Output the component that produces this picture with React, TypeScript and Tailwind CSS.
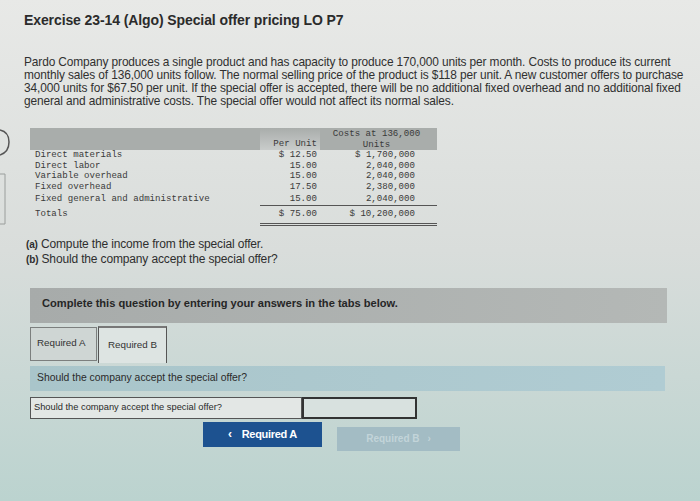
import React from 'react';

const rows = [
  { label: 'Direct materials', unit: '$ 12.50', total: '$ 1,700,000' },
  { label: 'Direct labor', unit: '15.00', total: '2,040,000' },
  { label: 'Variable overhead', unit: '15.00', total: '2,040,000' },
  { label: 'Fixed overhead', unit: '17.50', total: '2,380,000' },
];

const paragraph = [
  'Pardo Company produces a single product and has capacity to produce 170,000 units per month. Costs to produce its current',
  'monthly sales of 136,000 units follow. The normal selling price of the product is $118 per unit. A new customer offers to purchase',
  '34,000 units for $67.50 per unit. If the special offer is accepted, there will be no additional fixed overhead and no additional fixed',
  'general and administrative costs. The special offer would not affect its normal sales.',
];

const App = () => {
  return (
    <div
      className="relative w-[700px] h-[501px] overflow-hidden bg-gradient-to-b from-[#e8e9e7] via-[#d9dddb] to-[#bbd3cf] text-[#262626] pl-[24px]"
      style={{ fontFamily: '"Liberation Sans", Arial, sans-serif' }}
    >
      {/* left edge bits of the window behind */}
      <svg className="absolute left-0 top-[128px]" width="12" height="100" viewBox="0 0 12 100">
        <path d="M0 2 Q9 4 9 14 Q9 24 0 27" fill="none" stroke="#555" strokeWidth="1.5" />
        <path d="M0 46 H5 V96 H0" fill="none" stroke="#9a9e9c" strokeWidth="1" />
      </svg>

      <h1 className="pt-[12px] text-[14px] leading-[16px] font-bold tracking-[-0.1px] text-[#2b2b2b]">
        Exercise 23-14 (Algo) Special offer pricing LO P7
      </h1>

      <div className="mt-[28px] text-[11.9px] leading-[13px] tracking-[-0.12px] text-[#303030] whitespace-nowrap">
        {paragraph.map((line) => (
          <div key={line}>{line}</div>
        ))}
      </div>

      {/* cost table */}
      <div
        className="ml-[6px] mt-[20px] w-[407px] text-[9.1px] text-[#3a3a3a]"
        style={{ fontFamily: '"Liberation Mono", "DejaVu Sans Mono", monospace' }}
      >
        <div className="grid grid-cols-[230px_60px_117px] h-[22px] bg-[#a9adab] leading-[10.5px]">
          <div />
          <div className="flex items-end justify-end pr-[3px] pb-[1px] bg-gradient-to-b from-[#a9adab] to-[#c9cccb]">Per Unit</div>
          <div className="text-center pr-[4px] pt-[1px]">
            <div>Costs at 136,000</div>
            <div>Units</div>
          </div>
        </div>
        {rows.map((r) => (
          <div key={r.label} className="grid grid-cols-[230px_60px_117px] leading-[10.5px]">
            <div className="pl-[5px]">{r.label}</div>
            <div className="text-right pr-[3px]">{r.unit}</div>
            <div className="text-right pr-[22px]">{r.total}</div>
          </div>
        ))}
        <div className="grid grid-cols-[230px_60px_117px] leading-[10.5px] pt-[1.5px]">
          <div className="pl-[5px]">Fixed general and administrative</div>
          <div className="text-right pr-[3px] border-b border-[#555] pb-[1px]">15.00</div>
          <div className="text-right pr-[22px] border-b border-[#555] pb-[1px]">2,040,000</div>
        </div>
        <div className="grid grid-cols-[230px_60px_117px] leading-[10.5px] pt-[3px]">
          <div className="pl-[5px]">Totals</div>
          <div className="text-right pr-[3px] border-b-[3px] border-double border-[#555] pb-[3px]">$ 75.00</div>
          <div className="text-right pr-[22px] border-b-[3px] border-double border-[#555] pb-[3px]">$ 10,200,000</div>
        </div>
      </div>

      <div className="mt-[11px] ml-[2px] text-[12px] leading-[15px] tracking-[-0.15px] text-[#2e2e2e]">
        <div>
          <span className="font-bold text-[10px]">(a)</span> Compute the income from the special offer.
        </div>
        <div>
          <span className="font-bold text-[10px]">(b)</span> Should the company accept the special offer?
        </div>
      </div>

      {/* instructions band */}
      <div className="ml-[6px] mt-[21px] w-[637px] h-[35px] bg-gradient-to-r from-[#a7abaa] to-[#b4b8b6] pl-[12px] pt-[9px]">
        <div className="text-[11.1px] leading-[13px] font-bold text-[#262626]">
          Complete this question by entering your answers in the tabs below.
        </div>
      </div>

      {/* tabs */}
      <div className="ml-[6px] mt-[3px] flex items-start text-[9.8px] text-[#333]">
        <div className="w-[67px] h-[34px] mt-[1px] flex items-center pl-[6px] border border-[#7c7f7e] bg-[#cfd6d4]">
          Required A
        </div>
        <div className="w-[69px] h-[37px] ml-[1px] flex items-center pl-[9px] border border-[#555] border-t-2 border-t-[#777] border-b-0 bg-[#dde4e2]">
          Required B
        </div>
      </div>

      <div className="ml-[6px] mt-[3px] w-[635px] h-[25px] flex items-center pl-[7px] bg-gradient-to-r from-[#a9c5ca] to-[#b0ccd3] text-[10.4px] text-[#2a2a2a]">
        Should the company accept the special offer?
      </div>

      {/* answer row */}
      <div className="ml-[6px] mt-[6px] flex h-[22px] text-[9.3px] text-[#2a2a2a]">
        <div className="w-[272px] flex items-center pl-[3px] border border-[#555] bg-[#e3e7e5]">
          Should the company accept the special offer?
        </div>
        <div className="w-[115px] border-2 border-[#333] bg-[#d8e1df]" />
      </div>

      {/* nav buttons */}
      <div className="ml-[179px] mt-[3px] flex items-start">
        <button className="w-[119px] h-[25px] flex items-center justify-center gap-[10px] bg-[#1d5290] text-white text-[11px] font-bold tracking-[-0.3px]">
          <span className="text-[12px]">&#8249;</span>
          <span>Required A</span>
        </button>
        <button className="ml-[15px] mt-[5px] w-[123px] h-[24px] flex items-center justify-center gap-[8px] bg-[#a3bcc4] text-[#c2d4d9] text-[10px] font-bold">
          <span>Required B</span>
          <span>&#8250;</span>
        </button>
      </div>
    </div>
  );
};

export default App;
